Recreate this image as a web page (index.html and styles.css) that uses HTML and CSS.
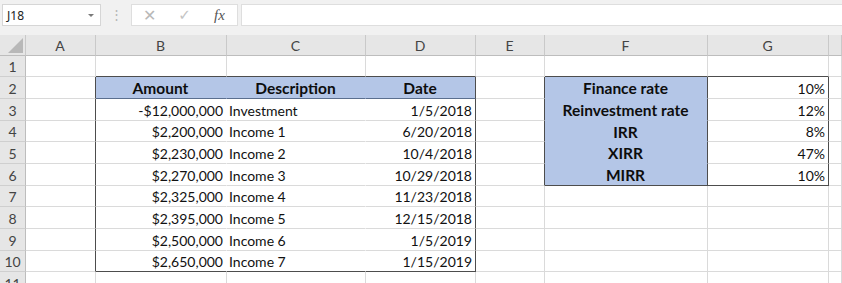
FILE: index.html
```html
<!DOCTYPE html>
<html lang="en">
<head>
    <meta charset="UTF-8">
    <title>MIRR</title>
    <link rel="stylesheet" href="styles.css">
</head>
<body>
    <div class="fbar">
        <div class="namebox"><span>J18</span><span class="caret"></span></div>
        <div class="grip">⋮</div>
        <div class="fbtns">
            <span class="cancel">✕</span>
            <span class="enter">✓</span>
            <span class="fx">fx</span>
        </div>
        <div class="finput"></div>
    </div>

    <div class="sheet">
        <div class="row hdr s">
            <div class="c corner"><span class="tri"></span></div>
            <div class="c">A</div><div class="c">B</div><div class="c">C</div><div class="c">D</div>
            <div class="c">E</div><div class="c">F</div><div class="c">G</div><div class="c"></div>
        </div>
        <div class="row s">
            <div class="c rh">1</div>
            <div class="c"></div><div class="c eb"></div><div class="c eb"></div><div class="c eb"></div>
            <div class="c"></div><div class="c eb"></div><div class="c eb"></div><div class="c"></div>
        </div>
        <div class="row">
            <div class="c rh">2</div>
            <div class="c er"></div>
            <div class="c fill nr hb b">Amount</div>
            <div class="c fill nr hb b">Description</div>
            <div class="c fill er hb b">Date</div>
            <div class="c er"></div>
            <div class="c fill er nb b">Finance rate</div>
            <div class="c er r">10%</div>
            <div class="c"></div>
        </div>
        <div class="row">
            <div class="c rh">3</div>
            <div class="c er"></div>
            <div class="c nr r">-$12,000,000</div>
            <div class="c nr">Investment</div>
            <div class="c er r">1/5/2018</div>
            <div class="c er"></div>
            <div class="c fill er nb b">Reinvestment rate</div>
            <div class="c er r">12%</div>
            <div class="c"></div>
        </div>
        <div class="row s">
            <div class="c rh">4</div>
            <div class="c er"></div>
            <div class="c nr r">$2,200,000</div>
            <div class="c nr">Income 1</div>
            <div class="c er r">6/20/2018</div>
            <div class="c er"></div>
            <div class="c fill er nb b">IRR</div>
            <div class="c er r">8%</div>
            <div class="c"></div>
        </div>
        <div class="row">
            <div class="c rh">5</div>
            <div class="c er"></div>
            <div class="c nr r">$2,230,000</div>
            <div class="c nr">Income 2</div>
            <div class="c er r">10/4/2018</div>
            <div class="c er"></div>
            <div class="c fill er nb b">XIRR</div>
            <div class="c er r">47%</div>
            <div class="c"></div>
        </div>
        <div class="row">
            <div class="c rh">6</div>
            <div class="c er"></div>
            <div class="c nr r">$2,270,000</div>
            <div class="c nr">Income 3</div>
            <div class="c er r">10/29/2018</div>
            <div class="c er"></div>
            <div class="c fill er eb b">MIRR</div>
            <div class="c er eb r">10%</div>
            <div class="c"></div>
        </div>
        <div class="row s">
            <div class="c rh">7</div>
            <div class="c er"></div>
            <div class="c nr r">$2,325,000</div>
            <div class="c nr">Income 4</div>
            <div class="c er r">11/23/2018</div>
            <div class="c"></div><div class="c"></div><div class="c"></div><div class="c"></div>
        </div>
        <div class="row">
            <div class="c rh">8</div>
            <div class="c er"></div>
            <div class="c nr r">$2,395,000</div>
            <div class="c nr">Income 5</div>
            <div class="c er r">12/15/2018</div>
            <div class="c"></div><div class="c"></div><div class="c"></div><div class="c"></div>
        </div>
        <div class="row">
            <div class="c rh">9</div>
            <div class="c er"></div>
            <div class="c nr r">$2,500,000</div>
            <div class="c nr">Income 6</div>
            <div class="c er r">1/5/2019</div>
            <div class="c"></div><div class="c"></div><div class="c"></div><div class="c"></div>
        </div>
        <div class="row s">
            <div class="c rh">10</div>
            <div class="c er"></div>
            <div class="c nr eb r">$2,650,000</div>
            <div class="c nr eb">Income 7</div>
            <div class="c er eb r">1/15/2019</div>
            <div class="c"></div><div class="c"></div><div class="c"></div><div class="c"></div>
        </div>
        <div class="row">
            <div class="c rh">11</div>
            <div class="c"></div><div class="c"></div><div class="c"></div><div class="c"></div>
            <div class="c"></div><div class="c"></div><div class="c"></div><div class="c"></div>
        </div>
    </div>
</body>
</html>
```

FILE: styles.css
```css
* {
    margin: 0;
    padding: 0;
    box-sizing: border-box;
}
body {
    width: 842px;
    height: 283px;
    overflow: hidden;
    background: #fff;
    font-family: Lato, "Liberation Sans", sans-serif;
    font-size: 14px;
    color: #111;
}

/* formula bar */
.fbar {
    display: flex;
    align-items: flex-start;
    height: 35px;
    padding: 4px 0 0 2px;
    background: #f1f1f1;
}
.namebox {
    display: flex;
    align-items: center;
    justify-content: space-between;
    width: 99px;
    height: 22px;
    padding: 0 6px 0 4px;
    background: #fff;
    border: 1px solid #d6d6d6;
    font-family: "Noto Sans", sans-serif;
    font-size: 12px;
    color: #222;
}
.caret {
    width: 0;
    height: 0;
    border-left: 3px solid transparent;
    border-right: 3px solid transparent;
    border-top: 3px solid #7a7a7a;
}
.grip {
    width: 30px;
    text-align: center;
    line-height: 20px;
    color: #b5b5b5;
    font-size: 13px;
}
.fbtns {
    display: flex;
    align-items: center;
    width: 107px;
    height: 22px;
    background: #fff;
    border: 1px solid #dedede;
}
.fbtns span {
    width: 35px;
    text-align: center;
}
.cancel {
    color: #b8b8b8;
    font-family: "DejaVu Sans", sans-serif;
    font-size: 16px;
    font-weight: 200;
}
.enter {
    color: #c4c4c4;
    font-family: "DejaVu Sans", sans-serif;
    font-size: 15px;
}
.fx {
    font-family: "Liberation Serif", serif;
    font-style: italic;
    font-size: 15px;
    color: #555;
}
.finput {
    flex: 1;
    height: 22px;
    margin-left: 3px;
    background: #fff;
    border: 1px solid #dedede;
    border-right: none;
}

/* grid */
.row {
    display: grid;
    grid-template-columns: 26px 70px 131px 139px 110px 69px 163px 121px 1fr;
    height: 22px;
}
.row.s {
    height: 21px;
}
.c {
    display: flex;
    align-items: center;
    padding: 1px 3px 0 2px;
    white-space: nowrap;
    border-right: 1px solid #dadada;
    border-bottom: 1px solid #dadada;
}
.hdr .c {
    justify-content: center;
    background: #e6e6e6;
    color: #444;
    border-right-color: #c9c9c9;
    border-bottom-color: #bdbdbd;
}
.corner {
    position: relative;
}
.tri {
    position: absolute;
    right: 2px;
    bottom: 2px;
    width: 0;
    height: 0;
    border-left: 15px solid transparent;
    border-bottom: 15px solid #b8b8b8;
}
.rh {
    justify-content: center;
    background: #e6e6e6;
    color: #444;
    padding: 1px 0 0;
    border-right-color: #bdbdbd;
    border-bottom-color: #cfcfcf;
}

.r { justify-content: flex-end; }
.b {
    justify-content: center;
    font-size: 15.5px;
    font-weight: bold;
    color: #0d0d0d;
}
.fill { background: #b4c6e7; }
.nr { border-right-color: transparent; }
.nb { border-bottom-color: transparent; }
.er { border-right-color: #4d4d4d; }
.eb { border-bottom-color: #4d4d4d; }
.hb { border-bottom: 1px solid #5b6f8f; }
```
